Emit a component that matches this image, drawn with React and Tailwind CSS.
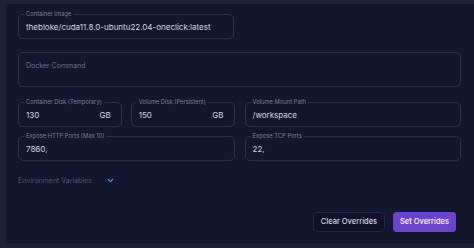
import { ChevronDown } from "lucide-react";

const font = { fontFamily: "Inter, 'Noto Sans', sans-serif" };

// outlined field with the label sitting on the border
const Field = ({ label, value, suffix, className = "" }) => (
  <div
    className={`relative h-[25px] flex items-center justify-between px-[7px] border border-[#2c3152] rounded-[5px] text-[8px] leading-none ${className}`}
  >
    {label && (
      <span className="absolute -top-[5px] left-[5px] px-[2px] bg-[#12162f] text-[5.8px] leading-[8px] text-[#7c819e]">
        {label}
      </span>
    )}
    <span className="text-[#d3d6e2]">{value}</span>
    {suffix && <span className="text-[#d3d6e2] pr-[3px]">{suffix}</span>}
  </div>
);

export default function App() {
  return (
    <div style={font} className="w-[474px] h-[248px] bg-[#1c2039] overflow-hidden">
      <div className="ml-[6px] mt-[4px] h-[239px] bg-[#12162f] pl-[12px] pr-[13px] pt-[10px] flex flex-col">
        {/* container image */}
        <Field
          label="Container Image"
          value="thebloke/cuda11.8.0-ubuntu22.04-oneclick:latest"
          className="w-[216px]"
        />

        {/* docker command */}
        <div className="mt-[13px] h-[35px] border border-[#2c3152] rounded-[5px] px-[7px] pt-[9px] text-[7px] leading-none text-[#6c7190]">
          Docker Command
        </div>

        {/* disks + mount path */}
        <div className="mt-[15px] grid grid-cols-2 gap-x-[10px] gap-y-[9px]">
          <div className="grid grid-cols-2 gap-[9px]">
            <Field label="Container Disk (Temporary)" value="130" suffix="GB" />
            <Field label="Volume Disk (Persistent)" value="150" suffix="GB" />
          </div>
          <Field label="Volume Mount Path" value="/workspace" />
          <Field label="Expose HTTP Ports (Max 10)" value="7860," />
          <Field label="Expose TCP Ports" value="22," />
        </div>

        {/* environment variables */}
        <div className="mt-[15px] flex items-center gap-[14px] text-[7px] leading-none">
          <span className="text-[#50557a]">Environment Variables</span>
          <ChevronDown size={9} strokeWidth={3} className="text-[#4ea8ec]" />
        </div>

        {/* actions */}
        <div className="mt-auto mb-[11px] flex justify-end gap-[8px] pr-[5px]">
          <button className="h-[20px] w-[72px] rounded-[4px] border border-[#22264a] bg-[#0e1127] text-[7.5px] font-medium text-[#d6d8e4]">
            Clear Overrides
          </button>
          <button className="h-[20px] w-[63px] rounded-[4px] bg-[#6c44cc] text-[7.5px] font-medium text-white">
            Set Overrides
          </button>
        </div>
      </div>
    </div>
  );
}
